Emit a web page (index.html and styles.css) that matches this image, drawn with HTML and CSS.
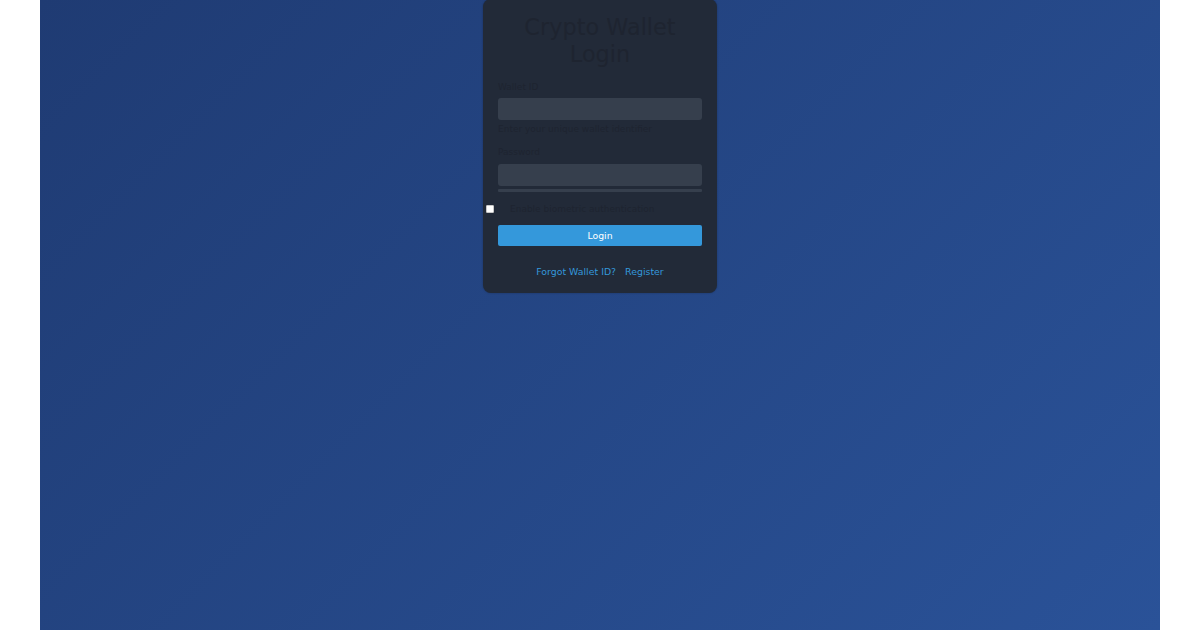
FILE: index.html
```html
<!DOCTYPE html>
<html lang="en">
<head>
<meta charset="utf-8">
<title>Crypto Wallet Login</title>
<link rel="stylesheet" href="styles.css">
</head>
<body>
<main class="page">
  <section class="card">
    <h1 class="title">Crypto Wallet Login</h1>
    <label class="label label-first">Wallet ID</label>
    <div class="input"></div>
    <p class="hint">Enter your unique wallet identifier</p>
    <label class="label label-second">Password</label>
    <div class="input"></div>
    <div class="meter"></div>
    <div class="check-row">
      <span class="box"></span>
      <span class="check-label">Enable biometric authentication</span>
    </div>
    <button class="btn">Login</button>
    <nav class="links">
      <a class="link">Forgot Wallet ID?</a>
      <a class="link">Register</a>
    </nav>
  </section>
</main>
</body>
</html>
```
FILE: styles.css
```css
html, body {
  margin: 0;
  padding: 0;
  background: #ffffff;
  font-family: "DejaVu Sans", sans-serif;
}
.page {
  margin: 0 40px;
  height: 630px;
  background: linear-gradient(135deg, #1f3b73 0%, #2a5298 100%);
  display: flex;
  justify-content: center;
  align-items: flex-start;
}
.card {
  width: 204px;
  padding: 15px 15px 15px;
  margin-top: -1px;
  background: #222a38;
  border-radius: 8px;
  display: flex;
  flex-direction: column;
  box-shadow: 0 0 2px rgba(0,0,0,0.3);
}
.title {
  margin: 0;
  font-size: 22.4px;
  font-weight: normal;
  line-height: 27px;
  text-align: center;
  color: #1e2430;
}
.label {
  display: block;
  font-size: 9px;
  line-height: 13px;
  color: #1e2430;
}
.label-first { margin-top: 13px; }
.label-second { margin-top: 10px; }
.input {
  margin-top: 5px;
  height: 22px;
  background: #363f4d;
  border-radius: 3px;
}
.label-first + .input { margin-top: 4px; }
.hint {
  margin: 3px 0 0;
  font-size: 9px;
  line-height: 13px;
  color: #1e2430;
}
.meter {
  margin-top: 3px;
  height: 3px;
  background: #363f4d;
  border-radius: 1px;
}
.check-row {
  margin-top: 12px;
  margin-left: -12px;
  display: flex;
  align-items: center;
  gap: 16px;
  height: 10px;
}
.box {
  width: 8px;
  height: 8px;
  background: #ffffff;
  border: 1px solid #c8c8c8;
  box-sizing: border-box;
  border-radius: 1px;
}
.check-label {
  font-size: 9px;
  color: #1e2430;
}
.btn {
  margin-top: 11px;
  height: 21px;
  border: none;
  border-radius: 2px;
  background: #3498db;
  color: #ffffff;
  font-family: "DejaVu Sans", sans-serif;
  font-size: 9.3px;
  padding: 0;
}
.links {
  margin-top: 20px;
  display: flex;
  justify-content: center;
  gap: 9px;
}
.link {
  font-size: 9.4px;
  line-height: 12px;
  color: #3498db;
}
```
